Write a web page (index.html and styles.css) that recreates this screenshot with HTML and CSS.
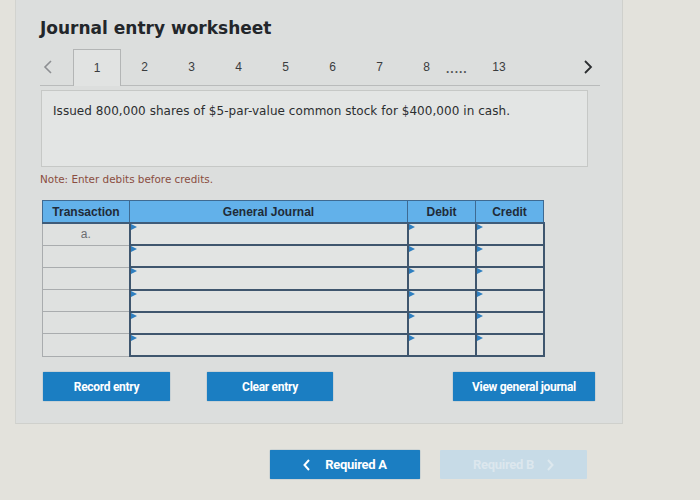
FILE: index.html
```html
<!DOCTYPE html>
<html>
<head>
<meta charset="utf-8">
<link rel="stylesheet" href="styles.css">
</head>
<body>
<div class="panel">
  <h1 class="title">Journal entry worksheet</h1>
  <div class="tabs">
    <span class="chev">
      <svg width="12" height="16" viewBox="0 0 12 16"><path d="M9 2 L3 8 L9 14" fill="none" stroke="#8d8f92" stroke-width="1.6"/></svg>
    </span>
    <span class="tab active">1</span>
    <span class="tab">2</span>
    <span class="tab">3</span>
    <span class="tab">4</span>
    <span class="tab">5</span>
    <span class="tab">6</span>
    <span class="tab">7</span>
    <span class="tab">8</span>
    <span class="dots">.....</span>
    <span class="tab last">13</span>
    <span class="chev next">
      <svg width="12" height="16" viewBox="0 0 12 16"><path d="M3 2 L9 8 L3 14" fill="none" stroke="#2b2d30" stroke-width="1.8"/></svg>
    </span>
  </div>
  <div class="question">Issued 800,000 shares of $5-par-value common stock for $400,000 in cash.</div>
  <div class="note">Note: Enter debits before credits.</div>
  <table class="journal">
    <thead>
      <tr><th class="c-tr">Transaction</th><th class="c-gj">General Journal</th><th class="c-dr">Debit</th><th class="c-cr">Credit</th></tr>
    </thead>
    <tbody>
      <tr><td class="c-tr">a.</td><td class="c-gj in"></td><td class="c-dr in"></td><td class="c-cr in"></td></tr>
      <tr><td class="c-tr"></td><td class="c-gj in"></td><td class="c-dr in"></td><td class="c-cr in"></td></tr>
      <tr><td class="c-tr"></td><td class="c-gj in"></td><td class="c-dr in"></td><td class="c-cr in"></td></tr>
      <tr><td class="c-tr"></td><td class="c-gj in"></td><td class="c-dr in"></td><td class="c-cr in"></td></tr>
      <tr><td class="c-tr"></td><td class="c-gj in"></td><td class="c-dr in"></td><td class="c-cr in"></td></tr>
      <tr><td class="c-tr"></td><td class="c-gj in"></td><td class="c-dr in"></td><td class="c-cr in"></td></tr>
    </tbody>
  </table>
  <div class="actions">
    <span class="btn b-record">Record entry</span>
    <span class="btn b-clear">Clear entry</span>
    <span class="btn b-view">View general journal</span>
  </div>
</div>
<div class="nav">
  <span class="btn nav-btn prev"><svg width="8" height="12" viewBox="0 0 8 12"><path d="M6 1 L1.5 6 L6 11" fill="none" stroke="#fff" stroke-width="2"/></svg>Required A</span>
  <span class="btn nav-btn disabled">Required B<svg width="8" height="12" viewBox="0 0 8 12"><path d="M2 1 L6.5 6 L2 11" fill="none" stroke="#dde8ee" stroke-width="2"/></svg></span>
</div>
</body>
</html>
```
FILE: styles.css
```css
html, body {
  margin: 0;
  padding: 0;
}
body {
  width: 700px;
  height: 500px;
  background: #e3e2dc;
  font-family: "Liberation Sans", Arial, sans-serif;
  overflow: hidden;
}
.panel {
  margin-left: 15px;
  width: 608px;
  height: 424px;
  background: #dcdedd;
  border-right: 1px solid #cfd0cc;
  border-bottom: 1px solid #cfd0cc;
  border-left: 1px solid #d2d3cf;
  box-sizing: border-box;
  padding: 17px 0 0 24px;
}
.title {
  margin: 0;
  font-family: "DejaVu Sans", sans-serif;
  font-weight: bold;
  font-size: 17px;
  line-height: 22px;
  color: #23262a;
}
.tabs {
  margin-top: 10px;
  width: 560px;
  height: 37px;
  display: flex;
  align-items: stretch;
  border-bottom: 1px solid #b9bbbb;
  box-sizing: border-box;
  font-size: 12px;
  color: #3a3c3e;
}
.chev {
  width: 33px;
  display: flex;
  align-items: center;
  padding-left: 2px;
  box-sizing: border-box;
}
.chev.next {
  margin-left: auto;
  width: 20px;
}
.tab {
  width: 47px;
  display: flex;
  align-items: center;
  justify-content: center;
  box-sizing: border-box;
}
.tab.active {
  width: 48px;
  background: #e1e3e2;
  border: 1px solid #b3b5b5;
  border-bottom: none;
  margin-bottom: -1px;
  position: relative;
}
.dots {
  display: flex;
  align-items: center;
  padding-top: 3px;
  margin-left: -4px;
  width: 40px;
  letter-spacing: 1px;
  font-weight: bold;
  color: #555;
}
.tab.last {
  width: 26px;
}
.question {
  margin: 4px 0 0 1px;
  width: 547px;
  height: 77px;
  box-sizing: border-box;
  background: #e3e5e4;
  border: 1px solid #c6c8c6;
  padding: 13px 0 0 11px;
  font-family: "DejaVu Sans", sans-serif;
  font-size: 12px;
  letter-spacing: 0.05px;
  color: #2c2e30;
}
.note {
  margin-top: 6px;
  font-family: "DejaVu Sans", sans-serif;
  font-size: 10.4px;
  color: #8a4d40;
}
.journal {
  margin: 15px 0 0 2px;
  border-collapse: collapse;
  width: 498px;
  table-layout: fixed;
}
.journal th {
  height: 21px;
  background: #62b1ea;
  border: 1px solid #3e6a92;
  border-bottom: 2px solid #3f5c7a;
  font-size: 12px;
  font-weight: bold;
  color: #1f2b38;
  padding: 0;
}
.c-tr { width: 86px; }
.c-gj { width: 277px; }
.c-dr { width: 67px; }
.c-cr { width: 67px; }
.journal td {
  height: 20.2px;
  padding: 0;
  border: 1px solid #a9acae;
  font-size: 12px;
  color: #6b6d70;
  text-align: center;
  vertical-align: middle;
}
.journal td.c-tr {
  background: #dfe1e0;
}
.journal td.in {
  border: 2px solid #3f566e;
  background: #e2e4e3;
  position: relative;
}
.journal td.in::before {
  content: "";
  position: absolute;
  left: 0;
  top: 0;
  border-left: 6px solid #2f7fc0;
  border-top: 3px solid transparent;
  border-bottom: 3px solid transparent;
}
.actions {
  margin-top: 15px;
  display: flex;
  align-items: center;
  padding-left: 3px;
}
.btn {
  display: inline-flex;
  align-items: center;
  justify-content: center;
  background: #1b7ec2;
  color: #fff;
  font-family: Roboto, "Liberation Sans", sans-serif;
  font-weight: bold;
  font-size: 12px;
  letter-spacing: -0.3px;
  height: 29px;
  border-radius: 1px;
  box-shadow: 0 0 1px #1a5f93;
}
.b-record { width: 127px; }
.b-clear { width: 126px; margin-left: 37px; }
.b-view { width: 142px; margin-left: 120px; }
.nav {
  margin-top: 26px;
  display: flex;
  padding-left: 270px;
  gap: 20px;
}
.nav-btn {
  width: 150px;
  height: 29px;
  font-size: 13px;
  gap: 12px;
}
.nav-btn.prev svg { margin-right: 2px; }
.nav-btn.disabled {
  width: 147px;
  background: #c7dbe7;
  color: #dce7ee;
  box-shadow: none;
}
```
